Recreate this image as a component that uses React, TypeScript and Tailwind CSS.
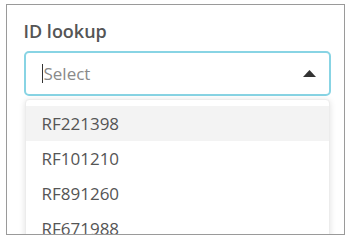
import React from 'react';

const ids = ['RF221398', 'RF101210', 'RF891260', 'RF671988'];

export default function App() {
  return (
    <div className="w-[350px] h-[240px] bg-white pt-[4px] pl-[6px]" style={{ fontFamily: '"Open Sans", sans-serif' }}>
      <div className="w-[339px] h-[231px] border-[1.5px] border-[#9a9a9a] overflow-hidden">
        <div className="pl-[16.5px] pt-[14px] pr-[12px]">
          <div className="text-[18px] leading-[24px] font-semibold text-[#555]">ID lookup</div>

          <div className="mt-[8px] w-[307px] h-[45px] rounded-[5px] border-[2px] border-[#88d4e4] flex items-center pl-[16px] pr-[13px]">
            <span className="w-[1.5px] h-[19px] bg-[#333]" />
            <span className="text-[17px] text-[#8a8a8a] ml-[0.5px]">Select</span>
            <svg className="ml-auto" width="13" height="7" viewBox="0 0 13 7">
              <path d="M0 7 L6.5 0 L13 7 Z" fill="#333" />
            </svg>
          </div>

          <div className="mt-[3px] ml-[1px] w-[305px] bg-white rounded-t-[4px] border border-[#ececec] shadow-[0_1px_6px_rgba(0,0,0,0.12)] pt-[6px]">
            {ids.map((id, i) => (
              <div
                key={id}
                className={`h-[35px] flex items-center pl-[16px] text-[17px] text-[#555] ${i === 0 ? 'bg-[#f3f3f3]' : ''}`}
              >
                {id}
              </div>
            ))}
          </div>
        </div>
      </div>
    </div>
  );
}
